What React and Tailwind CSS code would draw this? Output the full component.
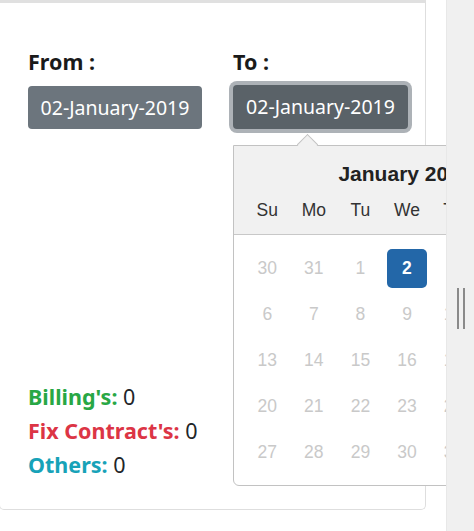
import React from 'react';

const weeks = [
  [30, 31, 1, 2, 3, 4, 5],
  [6, 7, 8, 9, 10, 11, 12],
  [13, 14, 15, 16, 17, 18, 19],
  [20, 21, 22, 23, 24, 25, 26],
  [27, 28, 29, 30, 31, 1, 2],
];
const dayNames = ['Su', 'Mo', 'Tu', 'We', 'Th', 'Fr', 'Sa'];

const DatePopup = () => {
  return (
    <div className="absolute left-[233px] top-[145px] w-[348px] border-[1.5px] border-[#c2c2c2] rounded-b-[6px] bg-white font-['Liberation_Sans',Arial,sans-serif]">
      {/* flecha */}
      <div className="absolute left-[66px] top-[-9px] w-[15px] h-[15px] rotate-45 bg-[#f1f1f1] border-t-[1.5px] border-l-[1.5px] border-[#c2c2c2]" />
      <div className="relative bg-[#f1f1f1] border-b-[1.5px] border-[#c8c8c8] px-[10px] pt-[14px] pb-[12px]">
        <div className="text-center text-[21px] font-bold text-[#222] leading-[28px] pr-[4px]">January 2019</div>
        <div className="grid grid-cols-7 mt-[10px]">
          {dayNames.map((d) => (
            <div key={d} className="text-center text-[17.5px] text-[#333] leading-[24px]">{d}</div>
          ))}
        </div>
      </div>
      <div className="px-[10px] pt-[10px] pb-[10px]">
        {weeks.map((w, i) => (
          <div key={i} className="grid grid-cols-7 h-[46px]">
            {w.map((n, j) => (
              <div key={j} className="flex items-center justify-center">
                {i === 0 && j === 3 ? (
                  <span className="flex items-center justify-center w-[40px] h-[39px] rounded-[5px] bg-[#2367a8] text-white font-bold text-[17.5px]">{n}</span>
                ) : (
                  <span className="text-[17.5px] text-[#c9c9c9]">{n}</span>
                )}
              </div>
            ))}
          </div>
        ))}
      </div>
    </div>
  );
};

export default function App() {
  return (
    <div className="flex w-[474px] h-[531px] bg-white overflow-hidden font-['Noto_Sans','Open_Sans',sans-serif]">
      <div className="relative w-[446px] h-full overflow-hidden">
        <div className="ml-[-1px] w-[427px] h-[510px] border border-[#dedede] border-t-[3px] border-t-[#e0e0e0] rounded-b-[5px] flex flex-col pt-[43px] pl-[28px] pb-[27px]">
          <div className="flex">
            <div className="w-[174px]">
              <div className="text-[21.5px] font-bold text-[#1a1a1a] leading-[31px]">From :</div>
              <div className="mt-[9px] w-[174px] h-[43px] rounded-[4px] bg-[#6c757d] text-white text-[19.5px] flex items-center justify-center">02-January-2019</div>
            </div>
            <div className="ml-[31px]">
              <div className="text-[21.5px] font-bold text-[#1a1a1a] leading-[31px]">To :</div>
              <div className="mt-[8px] w-[175px] h-[44px] rounded-[4px] bg-[#5a6268] text-white text-[19.5px] flex items-center justify-center ring-4 ring-[#adb2b7]">02-January-2019</div>
            </div>
          </div>
          <div className="mt-auto text-[21.5px] leading-[34px] text-[#212529]">
            <div><span className="font-bold text-[#28a745]">Billing's:</span> 0</div>
            <div><span className="font-bold text-[#dc3545]">Fix Contract's:</span> 0</div>
            <div><span className="font-bold text-[#17a2b8]">Others:</span> 0</div>
          </div>
        </div>
        <DatePopup />
      </div>
      <div className="relative w-[28px] h-full bg-[#f0f0f0] border-l border-[#e8e8e8]">
        <div className="absolute left-[10px] top-[288px] w-[2px] h-[41px] bg-[#8a8a8a]" />
        <div className="absolute left-[16px] top-[288px] w-[2px] h-[41px] bg-[#8a8a8a]" />
      </div>
    </div>
  );
}
